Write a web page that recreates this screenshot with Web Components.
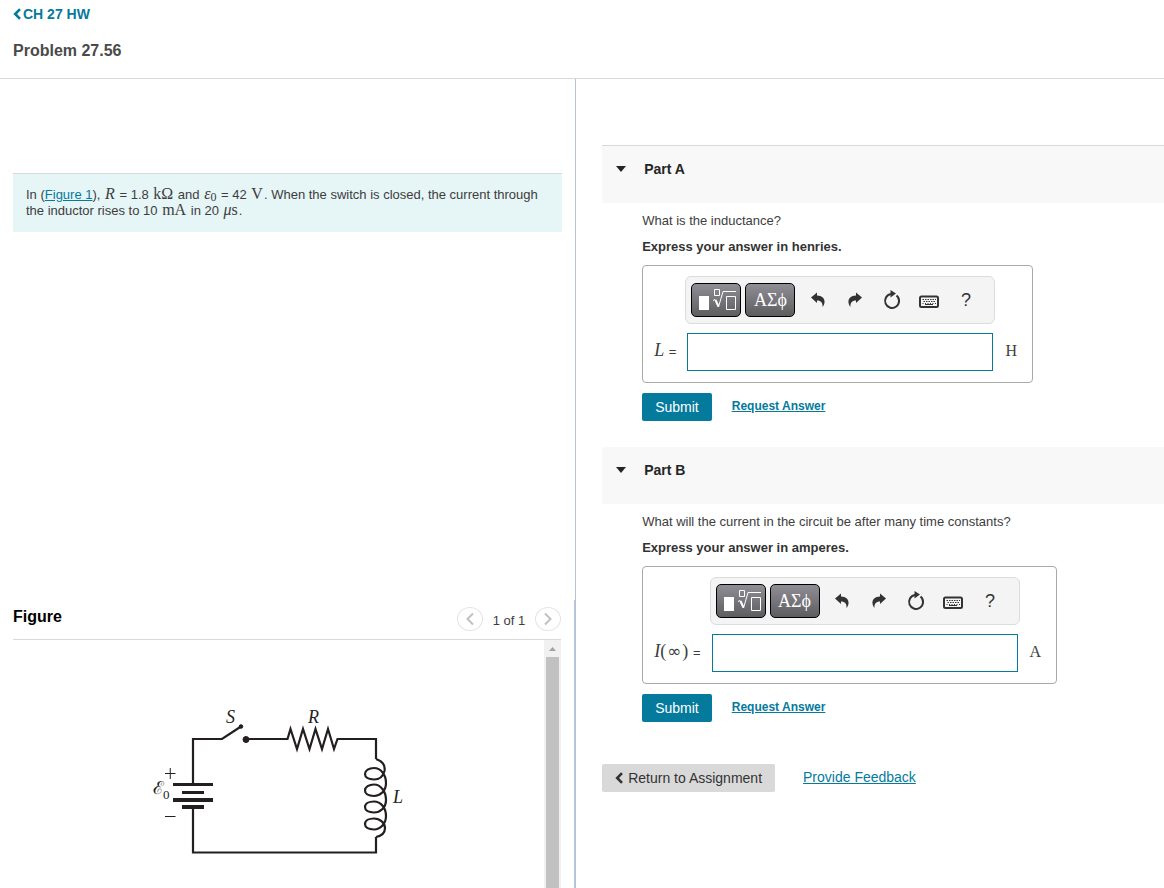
<!DOCTYPE html>
<html lang="en">
<head>
<meta charset="utf-8">
<title>Problem 27.56</title>
<style>
    html, body {
        height: 100%;
        margin: 0;
    }
    body {
        font-family: "Liberation Sans", Arial, sans-serif;
        font-size: 13px;
        line-height: 16px;
        color: #3d3d3d;
        background: #fff;
        --link: #047a9c;
        --line: #d9d9d9;
        --math: "Liberation Serif", "Times New Roman", serif;
    }
    .math {
        margin: 0 1px;
        font-family: var(--math);
        font-size: 16px;
        line-height: 0;
    }
    [slot=label] .math {
        margin-left: 0;
        font-size: 18px;
    }
    .inf {
        margin: 0 1px;
        font-family: "DejaVu Sans", sans-serif;
        font-size: 17px;
    }
    a {
        color: var(--link);
    }
    sub {
        font-size: 12px;
        line-height: 0;
        vertical-align: -2px;
    }
</style>
</head>
<body>
<hw-page>
    <hw-header slot="header" course="CH 27 HW">Problem 27.56</hw-header>

    <hw-statement slot="left">
        In (<a href="#figure">Figure 1</a>), <i class="math">R</i> = 1.8 <span class="math">kΩ</span> and <span class="math"><i>ε</i><sub>0</sub></span> = 42 <span class="math">V</span>. When the switch is closed, the current through the inductor rises to 10 <span class="math">mA</span> in 20 <span class="math"><i>μ</i>s</span>.
    </hw-statement>
    <hw-figure slot="left" id="figure" heading="Figure" count="1 of 1">
        <rl-circuit></rl-circuit>
    </hw-figure>

    <hw-part slot="right" heading="Part A">
        <span slot="question">What is the inductance?</span>
        <span slot="hint">Express your answer in henries.</span>
        <hw-answer>
            <span slot="label"><i class="math">L</i> =</span>
            <span slot="unit" class="math">H</span>
        </hw-answer>
    </hw-part>
    <hw-part slot="right" heading="Part B">
        <span slot="question">What will the current in the circuit be after many time constants?</span>
        <span slot="hint">Express your answer in amperes.</span>
        <hw-answer>
            <span slot="label"><span class="math"><i>I</i>(<span class="inf">∞</span>)</span> =</span>
            <span slot="unit" class="math">A</span>
        </hw-answer>
    </hw-part>
    <hw-footer slot="right"></hw-footer>
</hw-page>

<script>
class HwPage extends HTMLElement {
    constructor() {
        super();
        this.attachShadow({ mode: 'open' });
        this.shadowRoot.innerHTML = `
            <style>
                :host {
                    display: flex;
                    flex-direction: column;
                    min-height: 100%;
                }
                main {
                    flex: 1;
                    display: grid;
                    grid-template-columns: 99fr 101fr;
                }
                .left {
                    display: flex;
                    flex-direction: column;
                    justify-content: space-between;
                    border-right: 1px solid #b9c3cd;
                    padding-top: 94px;
                }
                .right {
                    padding: 66px 0 40px 26px;
                }
            </style>
            <slot name="header"></slot>
            <main>
                <section class="left"><slot name="left"></slot></section>
                <section class="right"><slot name="right"></slot></section>
            </main>
        `;
    }
}
customElements.define('hw-page', HwPage);

class HwHeader extends HTMLElement {
    constructor() {
        super();
        this.attachShadow({ mode: 'open' });
        this.shadowRoot.innerHTML = `
            <style>
                :host {
                    display: block;
                    padding: 6px 13px 18px;
                    border-bottom: 1px solid var(--line);
                }
                a {
                    display: inline-flex;
                    align-items: center;
                    gap: 1px;
                    font-size: 14px;
                    font-weight: bold;
                    color: var(--link);
                    text-decoration: none;
                }
                h1 {
                    margin: 18px 0 0;
                    font-size: 16px;
                    line-height: 18px;
                    color: #4a4a4a;
                }
            </style>
            <a href="#"><svg width="9" height="12" viewBox="0 0 9 12" fill="none" stroke="currentColor" stroke-width="2.6"><path d="M7 1.2L2.2 6L7 10.8"/></svg><span></span></a>
            <h1><slot></slot></h1>
        `;
    }
    connectedCallback() {
        this.shadowRoot.querySelector('a span').textContent = this.getAttribute('course');
    }
}
customElements.define('hw-header', HwHeader);

class HwStatement extends HTMLElement {
    constructor() {
        super();
        this.attachShadow({ mode: 'open' });
        this.shadowRoot.innerHTML = `
            <style>
                :host {
                    display: block;
                    margin: 0 13px;
                    padding: 13px;
                    background: #e6f5f6;
                    border-top: 1px solid var(--line);
                }
            </style>
            <slot></slot>
        `;
    }
}
customElements.define('hw-statement', HwStatement);

class HwFigure extends HTMLElement {
    constructor() {
        super();
        this.attachShadow({ mode: 'open' });
        this.shadowRoot.innerHTML = `
            <style>
                :host {
                    display: block;
                    padding: 0 13px;
                    border-right: 1px solid #b4c8de;
                }
                header {
                    display: flex;
                    align-items: center;
                    justify-content: space-between;
                    padding: 7px 0 8px;
                    border-bottom: 1px solid var(--line);
                }
                h2 {
                    margin: 0;
                    font-size: 16px;
                    line-height: 18px;
                    padding-bottom: 4px;
                    color: #000;
                }
                nav {
                    display: flex;
                    align-items: center;
                    gap: 10px;
                }
                nav span {
                    padding-top: 3px;
                }
                button {
                    display: grid;
                    place-items: center;
                    width: 26px;
                    height: 24px;
                    padding: 0;
                    border: 1px solid #e4e4e4;
                    border-radius: 50%;
                    background: #fff;
                    color: #c0c0c0;
                }
                .view {
                    display: flex;
                }
                .content {
                    flex: 1;
                    display: flex;
                    justify-content: center;
                    padding: 55px 0 23px;
                }
                .bar {
                    display: flex;
                    flex-direction: column;
                    align-items: center;
                    width: 17px;
                    background: #f1f1f1;
                }
                .thumb {
                    flex: 1;
                    width: 13px;
                    background: #c1c1c1;
                }
            </style>
            <header>
                <h2></h2>
                <nav>
                    <button aria-label="Previous figure"><svg width="10" height="14" viewBox="0 0 10 14" fill="none" stroke="currentColor" stroke-width="2"><path d="M8 1.5L2.5 7L8 12.5"/></svg></button>
                    <span></span>
                    <button aria-label="Next figure"><svg width="10" height="14" viewBox="0 0 10 14" fill="none" stroke="currentColor" stroke-width="2"><path d="M2 1.5L7.5 7L2 12.5"/></svg></button>
                </nav>
            </header>
            <div class="view">
                <div class="content"><slot></slot></div>
                <div class="bar">
                    <svg width="17" height="17" viewBox="0 0 17 17"><path d="M5 11L8.5 7L12 11z" fill="#a3a3a3"/></svg>
                    <div class="thumb"></div>
                </div>
            </div>
        `;
    }
    connectedCallback() {
        this.shadowRoot.querySelector('h2').textContent = this.getAttribute('heading');
        this.shadowRoot.querySelector('nav span').textContent = this.getAttribute('count');
    }
}
customElements.define('hw-figure', HwFigure);

class RlCircuit extends HTMLElement {
    constructor() {
        super();
        this.attachShadow({ mode: 'open' });
        this.shadowRoot.innerHTML = `
            <style>
                :host {
                    display: block;
                }
                svg {
                    display: block;
                    fill: none;
                    stroke: #231f20;
                    stroke-width: 2.2;
                }
                text {
                    fill: #231f20;
                    stroke: none;
                    font-family: var(--math);
                    font-size: 18px;
                }
                .var {
                    font-style: italic;
                }
                .sub {
                    font-size: 13px;
                }
            </style>
            <svg width="277" height="170" viewBox="0 0 277 170" role="img" aria-label="RL circuit">
                <!-- battery side up to the switch -->
                <path d="M53 89V44H82L101 31.5"/>
                <circle cx="101" cy="31.5" r="1.8" fill="#231f20" stroke-width="1"/>
                <circle cx="106" cy="44.5" r="3" fill="#231f20" stroke-width="1"/>
                <!-- resistor -->
                <path d="M106 44H147.5L150.5 34L157 54L163 34L169.5 54L175.5 34L182 54L188 34L194 54L197.5 44H236V64"/>
                <!-- inductor -->
                <path d="M236 64C242 66 245.5 70 244.5 76C243 82 239 84.5 234 84.5C228 84.5 225 82 225 79C225 75.5 229 73 234 73C241 73 246 80 246 88C246 96 240 101 234 101C228 101 225 98.5 225 95.5C225 92 229 89.5 234 89.5C241 89.5 246 97 246 105C246 113 240 117.5 234 117.5C228 117.5 225 115 225 112C225 108.5 229 106.5 234 106.5C241 106.5 246 113 246 121C246 129 240 134.5 234 134.5C228 134.5 225 132 225 129C225 125.5 229 123.5 234 123.5C240 123.5 245 128 245 133C245 138 241 141 236 142"/>
                <path d="M236 142V157.5H53V112"/>
                <!-- battery -->
                <path d="M33 89.5H73M42 97.5H64" stroke-width="3"/>
                <path d="M33 105H73M42 112H64" stroke-width="4"/>
                <path d="M25 78.5H35.5M30.25 73V84M25 121.5H35.5" stroke-width="1"/>
                <text class="var" x="86" y="28">S</text>
                <text class="var" x="168" y="28">R</text>
                <text class="var" x="253" y="108">L</text>
                <text x="13" y="99">ℰ</text>
                <text class="sub" x="23" y="104">0</text>
            </svg>
        `;
    }
}
customElements.define('rl-circuit', RlCircuit);

class HwPart extends HTMLElement {
    constructor() {
        super();
        this.attachShadow({ mode: 'open' });
        this.shadowRoot.innerHTML = `
            <style>
                :host {
                    display: block;
                    margin-bottom: 26px;
                }
                :host(:first-of-type) header {
                    border-top: 1px solid var(--line);
                }
                header {
                    display: flex;
                    align-items: center;
                    padding: 15px 14px 26px;
                    background: #f8f8f8;
                }
                button {
                    display: flex;
                    align-items: center;
                    gap: 18px;
                    padding: 0;
                    border: 0;
                    background: none;
                    font: bold 14px/16px "Liberation Sans", Arial, sans-serif;
                    color: #252525;
                }
                .body {
                    padding: 10px 0 0 40px;
                }
                p {
                    margin: 0 0 10px;
                }
                .hint {
                    font-weight: bold;
                    color: #333;
                }
                .actions {
                    display: flex;
                    align-items: center;
                    gap: 20px;
                    margin-top: 10px;
                }
                .submit {
                    height: 28px;
                    padding: 0 13px;
                    border-radius: 2px;
                    background: #047a9c;
                    color: #fff;
                    font-weight: normal;
                }
                .actions a {
                    font-size: 12px;
                    font-weight: bold;
                    color: var(--link);
                    padding-bottom: 2px;
                }
            </style>
            <header>
                <button aria-expanded="true"><svg width="10" height="6" viewBox="0 0 10 6"><path d="M0 0H10L5 6z" fill="#252525"/></svg><span></span></button>
            </header>
            <div class="body">
                <p><slot name="question"></slot></p>
                <p class="hint"><slot name="hint"></slot></p>
                <slot></slot>
                <div class="actions">
                    <button class="submit">Submit</button>
                    <a href="#">Request Answer</a>
                </div>
            </div>
        `;
    }
    connectedCallback() {
        this.shadowRoot.querySelector('header span').textContent = this.getAttribute('heading');
    }
}
customElements.define('hw-part', HwPart);

class MathToolbar extends HTMLElement {
    constructor() {
        super();
        this.attachShadow({ mode: 'open' });
        this.shadowRoot.innerHTML = `
            <style>
                :host {
                    display: flex;
                    align-items: center;
                    gap: 4px;
                    box-sizing: border-box;
                    height: 48px;
                    padding: 0 10px 0 5px;
                    background: #f4f4f4;
                    border: 1px solid #dcdcdc;
                    border-radius: 6px;
                }
                button {
                    display: grid;
                    place-items: center;
                    width: 37px;
                    height: 34px;
                    padding: 0;
                    border: 0;
                    background: none;
                    color: #333;
                    font: 18px/20px "Liberation Sans", Arial, sans-serif;
                }
                .dark {
                    width: 50px;
                    border: 1px solid #000;
                    border-radius: 5px;
                    background: linear-gradient(#908e95, #5d5d5f);
                    color: #fff;
                    font-family: var(--math);
                }
                .icons {
                    display: flex;
                }
            </style>
            <button class="dark" aria-label="Templates">
                <svg width="40" height="26" viewBox="0 0 40 26" fill="none" stroke="#fff">
                    <path d="M3 9H13V23H3z" fill="#fff" stroke="none"/>
                    <path d="M18.5 2.5H23.5V8.5H18.5z"/>
                    <path d="M17 13.5L19 12.5L22.5 20L27 4.5H40"/>
                    <path d="M19.5 13L22.5 19.5" stroke-width="2"/>
                    <path d="M30.5 9.5H39.5V22.5H30.5z"/>
                </svg>
            </button>
            <button class="dark" aria-label="Symbols">ΑΣϕ</button>
            <div class="icons">
                <button aria-label="Undo"><svg width="16" height="16" viewBox="0 0 16 16" fill="#333"><path d="M1 5.5L7 0.5V3.5C12 3.5 15 6.5 14.5 10.5C14.3 12.5 13.3 14 12.5 15C13 11 11 8.5 7 8.5V11z"/></svg></button>
                <button aria-label="Redo"><svg width="16" height="16" viewBox="0 0 16 16" fill="#333"><path d="M15 5.5L9 0.5V3.5C4 3.5 1 6.5 1.5 10.5C1.7 12.5 2.7 14 3.5 15C3 11 5 8.5 9 8.5V11z"/></svg></button>
                <button aria-label="Reset"><svg width="18" height="20" viewBox="0 0 18 20" fill="none" stroke="#333" stroke-width="2"><path d="M13.5 5.5A7 7 0 1 1 8 4"/><path d="M7.5 0L13 3.5L7.5 7.5z" fill="#333" stroke="none"/></svg></button>
                <button aria-label="Keyboard shortcuts"><svg width="20" height="20" viewBox="0 0 20 20" fill="none" stroke="#333"><rect x="1" y="6.5" width="18" height="10.5" rx="1.5" stroke-width="2"/><path d="M3.5 9.500H17M4.5 11.5H17" stroke-dasharray="1.5 1"/><path d="M3.5 13.5H17" stroke-dasharray="1 1.5"/><path d="M6 14.5H14"/></svg></button>
                <button aria-label="Help">?</button>
            </div>
        `;
    }
}
customElements.define('math-toolbar', MathToolbar);

class HwAnswer extends HTMLElement {
    constructor() {
        super();
        this.attachShadow({ mode: 'open' });
        this.shadowRoot.innerHTML = `
            <style>
                :host {
                    display: grid;
                    width: fit-content;
                    grid-template-columns: repeat(3, auto);
                    gap: 9px;
                    align-items: center;
                    padding: 10px 14px 11px 11px;
                    border: 1px solid #a9a9a9;
                    border-radius: 4px;
                }
                math-toolbar {
                    grid-column: 2;
                }
                label {
                    grid-column: 1;
                }
                input {
                    box-sizing: border-box;
                    justify-self: center;
                    width: 306px;
                    height: 38px;
                    padding: 0 8px;
                    border: 1px solid #047a9c;
                    font: 16px "Liberation Sans", Arial, sans-serif;
                }
                ::slotted([slot=unit]) {
                    padding-bottom: 2px;
                }
            </style>
            <math-toolbar></math-toolbar>
            <label for="answer"><slot name="label"></slot></label>
            <input id="answer" type="text">
            <slot name="unit"></slot>
        `;
    }
}
customElements.define('hw-answer', HwAnswer);

class HwFooter extends HTMLElement {
    constructor() {
        super();
        this.attachShadow({ mode: 'open' });
        this.shadowRoot.innerHTML = `
            <style>
                :host {
                    display: flex;
                    align-items: center;
                    gap: 28px;
                    margin-top: 42px;
                    font-size: 14px;
                }
                button {
                    display: flex;
                    align-items: center;
                    gap: 4px;
                    height: 28px;
                    padding: 0 13px;
                    border: 0;
                    border-radius: 2px;
                    background: #d9d9d9;
                    color: #333;
                    font: inherit;
                }
                a {
                    color: var(--link);
                    padding-bottom: 2px;
                }
            </style>
            <button><svg width="9" height="12" viewBox="0 0 9 12" fill="none" stroke="currentColor" stroke-width="2.6"><path d="M7 1.2L2.2 6L7 10.8"/></svg>Return to Assignment</button>
            <a href="#">Provide Feedback</a>
        `;
    }
}
customElements.define('hw-footer', HwFooter);
</script>
</body>
</html>
